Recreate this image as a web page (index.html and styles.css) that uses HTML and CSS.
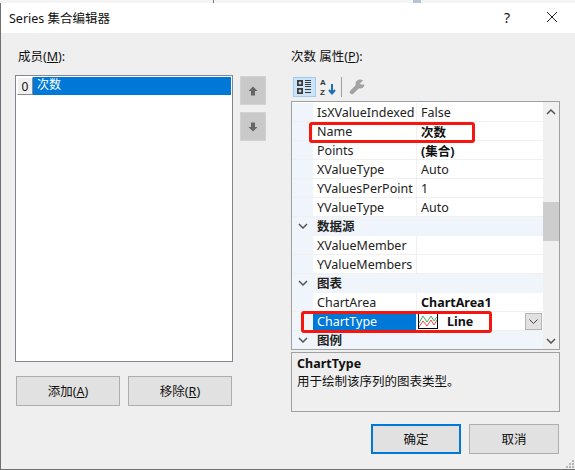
FILE: index.html
```html
<!DOCTYPE html>
<html lang="zh-CN">
<head>
    <meta charset="UTF-8">
    <meta name="viewport" content="width=device-width, initial-scale=1.0">
    <title>Series 集合编辑器</title>
    <link rel="stylesheet" href="styles.css">
</head>
<body>
    <div class="backdrop">
        <span class="tick tick-a"></span>
        <span class="tick tick-b"></span>
    </div>
    <div class="dialog">
        <div class="titlebar">
            <span class="title">Series 集合编辑器</span>
            <span class="help">?</span>
            <svg class="close" width="12" height="12" viewBox="0 0 12 12"><path d="M1 1l10 10M11 1L1 11" stroke="#222" stroke-width="1" fill="none"/></svg>
        </div>
        <div class="content">
            <div class="left">
                <div class="label">成员(<u>M</u>):</div>
                <div class="members">
                    <div class="list">
                        <div class="list-row">
                            <span class="index">0</span>
                            <span class="member">次数</span>
                        </div>
                    </div>
                    <div class="arrows">
                        <button class="arrow">
                            <svg width="10" height="10" viewBox="0 0 10 10"><path d="M5 .5L9.500 5H7v4.500H3V5H.5z" fill="#666"/></svg>
                        </button>
                        <button class="arrow">
                            <svg width="10" height="10" viewBox="0 0 10 10"><path d="M5 9.500L9.500 5H7V.5H3V5H.5z" fill="#666"/></svg>
                        </button>
                    </div>
                </div>
                <div class="list-actions">
                    <button class="btn">添加(<u>A</u>)</button>
                    <button class="btn">移除(<u>R</u>)</button>
                </div>
            </div>
            <div class="right">
                <div class="label">次数 属性(<u>P</u>):</div>
                <div class="toolbar">
                    <span class="tool tool-on">
                        <svg width="18" height="16" viewBox="0 0 18 16">
                            <path d="M1 1h6v6H1zM1 9h6v6H1z" fill="#3b3b3b"/>
                            <path d="M2.500 4h3M4 2.500v3M2.500 12h3M4 10.500v3" stroke="#fff" stroke-width="1"/>
                            <path d="M9 1.500h6M9 3.500h6M9 5.500h6M9 7.500h6M9 10.500h6M9 13.500h6" stroke="#3b3b3b" stroke-width="1"/>
                        </svg>
                    </span>
                    <span class="tool">
                        <svg width="18" height="18" viewBox="0 0 18 18">
                            <text x="1" y="7" class="sort-letter">A</text>
                            <text x="1" y="17" class="sort-letter">Z</text>
                            <path d="M13 6v9M10 12l3 3.500 3-3.500" stroke="#1a6fb5" stroke-width="2" fill="none"/>
                        </svg>
                    </span>
                    <span class="tool-sep"></span>
                    <span class="tool">
                        <svg width="16" height="16" viewBox="0 0 16 16">
                            <path d="M3 13l6-6" stroke="#a3a3a3" stroke-width="4.500" stroke-linecap="round"/>
                            <circle cx="11" cy="5" r="4.500" fill="#a3a3a3"/>
                            <path d="M10.500 5L13 2.500 16 0v5.500h-3z" fill="#efefef"/>
                        </svg>
                    </span>
                </div>
                <div class="grid">
                    <div class="rows">
                        <div class="row"><span class="gutter"></span><span class="name">IsXValueIndexed</span><span class="value">False</span></div>
                        <div class="row"><span class="gutter"></span><span class="name">Name</span><span class="value strong">次数</span></div>
                        <div class="row"><span class="gutter"></span><span class="name">Points</span><span class="value strong">(集合)</span></div>
                        <div class="row"><span class="gutter"></span><span class="name">XValueType</span><span class="value">Auto</span></div>
                        <div class="row"><span class="gutter"></span><span class="name">YValuesPerPoint</span><span class="value">1</span></div>
                        <div class="row"><span class="gutter"></span><span class="name">YValueType</span><span class="value">Auto</span></div>
                        <div class="row category"><span class="gutter"><svg class="chevron" width="10" height="6" viewBox="0 0 10 6"><path d="M1 1l4 4 4-4" stroke="#555" stroke-width="1.500" fill="none"/></svg></span><span class="cat-name">数据源</span></div>
                        <div class="row"><span class="gutter"></span><span class="name">XValueMember</span><span class="value"></span></div>
                        <div class="row"><span class="gutter"></span><span class="name">YValueMembers</span><span class="value"></span></div>
                        <div class="row category"><span class="gutter"><svg class="chevron" width="10" height="6" viewBox="0 0 10 6"><path d="M1 1l4 4 4-4" stroke="#555" stroke-width="1.500" fill="none"/></svg></span><span class="cat-name">图表</span></div>
                        <div class="row"><span class="gutter"></span><span class="name">ChartArea</span><span class="value strong">ChartArea1</span></div>
                        <div class="row"><span class="gutter"></span><span class="name selected">ChartType</span>
                            <span class="value strong chart-value">
                                <svg class="chart-icon" width="20" height="16" viewBox="0 0 20 16">
                                    <rect x=".5" y=".5" width="19" height="15" fill="#fff" stroke="#000"/>
                                    <path d="M1 10L5 3l4 6 4-6 3 5 3-4" stroke="#35b45a" fill="none"/>
                                    <path d="M1 14l4-6 4 5 4-6 3 5 3-5" stroke="#f0454a" fill="none"/>
                                </svg>
                                Line
                                <span class="combo"><svg width="9" height="5" viewBox="0 0 9 5"><path d="M.5 .5l4 4 4-4" stroke="#444" fill="none"/></svg></span>
                            </span>
                        </div>
                        <div class="row category"><span class="gutter"><svg class="chevron" width="10" height="6" viewBox="0 0 10 6"><path d="M1 1l4 4 4-4" stroke="#555" stroke-width="1.500" fill="none"/></svg></span><span class="cat-name">图例</span></div>
                    </div>
                    <div class="scrollbar">
                        <svg class="scroll-up" width="10" height="6" viewBox="0 0 10 6"><path d="M1 5l4-4 4 4" stroke="#555" stroke-width="1.500" fill="none"/></svg>
                        <span class="thumb"></span>
                        <svg class="scroll-down" width="10" height="6" viewBox="0 0 10 6"><path d="M1 1l4 4 4-4" stroke="#555" stroke-width="1.500" fill="none"/></svg>
                    </div>
                </div>
                <div class="desc">
                    <div class="desc-title">ChartType</div>
                    <div class="desc-text">用于绘制该序列的图表类型。</div>
                </div>
                <div class="actions">
                    <button class="btn btn-main">确定</button>
                    <button class="btn btn-main btn-default">取消</button>
                </div>
            </div>
        </div>
        <svg class="grip" width="10" height="10" viewBox="0 0 10 10"><path d="M7 1h2v2H7zM4 4h2v2H4zM7 4h2v2H7zM1 7h2v2H1zM4 7h2v2H4zM7 7h2v2H7z" fill="#b5b5b5"/></svg>
    </div>
    <!-- red marks drawn over the screenshot -->
    <span class="mark mark-name"></span>
    <span class="mark mark-type"></span>
</body>
</html>
```

FILE: styles.css
```css
* {
    box-sizing: border-box;
}
body {
    margin: 0;
    width: 575px;
    height: 470px;
    overflow: hidden;
    position: relative;
    background: #fff;
    font-family: "Noto Sans", "Noto Sans CJK SC", sans-serif;
    font-size: 12px;
    color: #111;
}
u {
    text-underline-offset: 1px;
}
.backdrop {
    height: 3px;
    position: relative;
    background: #f4f4f4;
}
.tick {
    position: absolute;
    top: 0;
    height: 3px;
}
.tick-a { left: 213px; width: 1px; background: #777; }
.tick-b { left: 413px; width: 8px; background: #b9c4d6; }
.dialog {
    position: relative;
    height: 467px;
    border: 1px solid #707070;
    border-top: none;
    border-right: none;
    background: #efefef;
}
.titlebar {
    height: 30px;
    background: #fff;
    display: flex;
    align-items: center;
    padding: 0 0 2px 8px;
}
.title {
    flex: 1;
    font-size: 12.500px;
}
.help {
    width: 14px;
    margin-right: 32px;
    font-size: 14px;
    text-align: center;
}
.close {
    margin-right: 17px;
}
.content {
    display: flex;
    padding-top: 16px;
}
.left {
    width: 290px;
    padding-left: 14px;
}
.right {
    width: 269px;
}
.label {
    height: 16px;
    line-height: 16px;
    font-size: 12.500px;
    padding-left: 3px;
}
.right .label {
    padding-left: 0;
}
.members {
    display: flex;
    gap: 7px;
    margin-top: 10px;
}
.list {
    width: 218px;
    height: 287px;
    background: #fff;
    border: 1px solid #82878f;
    padding: 1px;
}
.list-row {
    display: flex;
    height: 18px;
    background: #0078d7;
    color: #fff;
}
.index {
    width: 16px;
    background: #f0f0f0;
    color: #111;
    text-align: center;
    line-height: 17px;
    border: 1px solid;
    border-color: #fff #8a8a8a #8a8a8a #fff;
}
.member {
    padding-left: 4px;
    line-height: 16px;
}
.arrows {
    display: flex;
    flex-direction: column;
    gap: 7px;
    margin-top: 1px;
}
.arrow {
    width: 26px;
    height: 29px;
    padding: 0;
    background: #c9c9c9;
    border: 1px solid #d2d2d2;
    display: flex;
    align-items: center;
    justify-content: center;
}
.list-actions {
    display: flex;
    gap: 8px;
    margin-top: 14px;
    padding-left: 1px;
}
.btn {
    width: 104px;
    height: 30px;
    padding: 0 0 2px;
    background: #e1e1e1;
    border: 1px solid #adadad;
    font: inherit;
    font-size: 12.500px;
    color: #111;
}
.toolbar {
    display: flex;
    align-items: center;
    height: 20px;
    margin-top: 12px;
    padding-left: 2px;
}
.tool {
    width: 23px;
    height: 20px;
    display: flex;
    align-items: center;
    justify-content: center;
    border: 1px solid transparent;
}
.tool-on {
    background: #cce4f7;
    border-color: #9fcdf0;
}
.tool-sep {
    width: 1px;
    height: 20px;
    margin: 0 3px 0 2px;
    background: #a0a0a0;
}
.sort-letter {
    font-family: "Liberation Sans", sans-serif;
    font-size: 8px;
    font-weight: 700;
    fill: #333;
}
.grid {
    display: flex;
    height: 249px;
    margin-top: 4px;
    background: #fff;
    border: 1px solid #a0a0a0;
}
.rows {
    width: 251px;
    height: 247px;
    padding-top: 1px;
    overflow: hidden;
}
.row {
    display: grid;
    grid-template-columns: 21px 104px 1fr;
    grid-template-rows: 18px;
    height: 19px;
    border-bottom: 1px solid #f0f0f0;
    font-size: 12.500px;
    color: #222;
}
.gutter {
    background: #f0f4fb;
    display: flex;
    align-items: center;
    justify-content: center;
}
.name {
    padding-left: 4px;
    line-height: 20px;
    border-right: 1px solid #f0f0f0;
    white-space: nowrap;
}
.value {
    padding: 1px 0 0 4px;
    display: flex;
    align-items: center;
}
.strong {
    font-weight: 700;
    color: #111;
}
.selected {
    background: #0078d7;
    color: #fff;
}
.category {
    background: #f0f4fb;
    border-bottom-color: #f0f4fb;
}
.cat-name {
    grid-column: span 2;
    padding-left: 4px;
    line-height: 19px;
    font-weight: 700;
}
.chart-value {
    padding: 0 0 0 1px;
}
.chart-icon {
    margin-right: 9px;
    flex: none;
}
.combo {
    width: 17px;
    height: 17px;
    margin-left: auto;
    margin-right: 1px;
    background: #e1e1e1;
    border: 1px solid #b5b5b5;
    display: flex;
    align-items: center;
    justify-content: center;
}
.scrollbar {
    width: 16px;
    background: #f0f0f0;
    display: flex;
    flex-direction: column;
    align-items: center;
    position: relative;
}
.thumb {
    position: absolute;
    top: 100px;
    left: 0;
    width: 16px;
    height: 39px;
    background: #cdcdcd;
}
.scroll-up {
    margin-top: 7px;
}
.scroll-down {
    margin-top: auto;
    margin-bottom: 5px;
}
.desc {
    height: 60px;
    margin-top: 2px;
    padding: 2px 5px;
    border: 1px solid #a0a0a0;
    background: #efefef;
}
.desc-title {
    font-weight: 700;
    line-height: 18px;
    font-size: 12.500px;
}
.desc-text {
    line-height: 18px;
    font-size: 12.500px;
}
.actions {
    display: flex;
    justify-content: flex-end;
    gap: 8px;
    margin-top: 12px;
    padding-right: 1px;
}
.btn-main {
    width: 90px;
    height: 30px;
    border: 2px solid #0078d7;
}
.btn-default {
    border: 1px solid #adadad;
}
.grip {
    position: absolute;
    right: 0;
    bottom: 0;
}
.mark {
    position: absolute;
    border: 3px solid #f5170f;
    border-radius: 3px;
}
.mark-name {
    left: 309px;
    top: 122px;
    width: 166px;
    height: 21px;
}
.mark-type {
    left: 301px;
    top: 311px;
    width: 191px;
    height: 22px;
}
```
